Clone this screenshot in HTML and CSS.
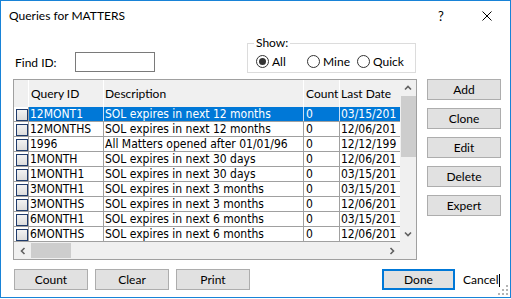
FILE: index.html
```html
<!DOCTYPE html>
<html>
<head>
<meta charset="utf-8">
<link rel="stylesheet" href="styles.css">
</head>
<body>
<div class="window">
  <div class="titlebar">
    <span class="title">Queries for MATTERS</span>
    <span class="capbtn help">?</span>
    <span class="capbtn"><svg width="10" height="10" viewBox="0 0 10 10"><path d="M0.5 0.5 L9.5 9.5 M9.5 0.5 L0.5 9.5" stroke="#000" stroke-width="1" fill="none"/></svg></span>
  </div>

  <div class="toprow">
    <div class="find">
      <span class="find-label">Find ID:</span>
      <span class="find-input"></span>
    </div>
    <fieldset class="show">
      <legend>Show:</legend>
      <div class="radios">
        <span class="opt opt-all"><span class="radio on"></span>All</span>
        <span class="opt opt-mine"><span class="radio"></span>Mine</span>
        <span class="opt"><span class="radio"></span>Quick</span>
      </div>
    </fieldset>
  </div>

  <div class="mainrow">
    <div class="list">
      <div class="list-main">
        <div class="row hdr">
          <span class="c-chk"></span>
          <span class="c-id">Query ID</span>
          <span class="c-desc">Description</span>
          <span class="c-cnt">Count</span>
          <span class="c-date">Last Date</span>
        </div>
        <div class="row sel"><span class="c-chk"><i class="cb"></i></span><span class="c-id">12MONT1</span><span class="c-desc">SOL expires in next 12 months</span><span class="c-cnt">0</span><span class="c-date">03/15/201</span></div>
        <div class="row"><span class="c-chk"><i class="cb"></i></span><span class="c-id">12MONTHS</span><span class="c-desc">SOL expires in next 12 months</span><span class="c-cnt">0</span><span class="c-date">12/06/201</span></div>
        <div class="row"><span class="c-chk"><i class="cb"></i></span><span class="c-id">1996</span><span class="c-desc">All Matters opened after 01/01/96</span><span class="c-cnt">0</span><span class="c-date">12/12/199</span></div>
        <div class="row"><span class="c-chk"><i class="cb"></i></span><span class="c-id">1MONTH</span><span class="c-desc">SOL expires in next 30 days</span><span class="c-cnt">0</span><span class="c-date">12/06/201</span></div>
        <div class="row"><span class="c-chk"><i class="cb"></i></span><span class="c-id">1MONTH1</span><span class="c-desc">SOL expires in next 30 days</span><span class="c-cnt">0</span><span class="c-date">03/15/201</span></div>
        <div class="row"><span class="c-chk"><i class="cb"></i></span><span class="c-id">3MONTH1</span><span class="c-desc">SOL expires in next 3 months</span><span class="c-cnt">0</span><span class="c-date">03/15/201</span></div>
        <div class="row"><span class="c-chk"><i class="cb"></i></span><span class="c-id">3MONTHS</span><span class="c-desc">SOL expires in next 3 months</span><span class="c-cnt">0</span><span class="c-date">12/06/201</span></div>
        <div class="row"><span class="c-chk"><i class="cb"></i></span><span class="c-id">6MONTH1</span><span class="c-desc">SOL expires in next 6 months</span><span class="c-cnt">0</span><span class="c-date">03/15/201</span></div>
        <div class="row"><span class="c-chk"><i class="cb"></i></span><span class="c-id">6MONTHS</span><span class="c-desc">SOL expires in next 6 months</span><span class="c-cnt">0</span><span class="c-date">12/06/201</span></div>
        <div class="hscroll">
          <span class="sb-btn"><svg width="8" height="8" viewBox="0 0 8 8"><path d="M5.5 1 L2.5 4 L5.5 7" stroke="#606060" stroke-width="1.6" fill="none"/></svg></span>
          <span class="hthumb"></span>
          <span class="htrack"></span>
          <span class="sb-btn"><svg width="8" height="8" viewBox="0 0 8 8"><path d="M2.5 1 L5.5 4 L2.5 7" stroke="#606060" stroke-width="1.6" fill="none"/></svg></span>
        </div>
      </div>
      <div class="list-side">
        <div class="vscroll">
          <span class="sb-btn v"><svg width="8" height="8" viewBox="0 0 8 8"><path d="M1 5.5 L4 2.5 L7 5.5" stroke="#606060" stroke-width="1.6" fill="none"/></svg></span>
          <span class="vthumb"></span>
          <span class="vtrack"></span>
          <span class="sb-btn v"><svg width="8" height="8" viewBox="0 0 8 8"><path d="M1 2.5 L4 5.5 L7 2.5" stroke="#606060" stroke-width="1.6" fill="none"/></svg></span>
        </div>
        <div class="corner"></div>
      </div>
    </div>
    <div class="sidebtns">
      <span class="btn">Add</span>
      <span class="btn">Clone</span>
      <span class="btn">Edit</span>
      <span class="btn">Delete</span>
      <span class="btn">Expert</span>
    </div>
  </div>

  <div class="bottomrow">
    <span class="btn">Count</span>
    <span class="btn">Clear</span>
    <span class="btn">Print</span>
    <span class="btn done">Done</span>
    <span class="cancel">Cancel<span class="caret"></span></span>
  </div>

  <svg class="grip" width="12" height="12" viewBox="0 0 12 12">
    <rect x="9" y="1" width="2" height="2" fill="#b4b4b4"/>
    <rect x="5" y="5" width="2" height="2" fill="#b4b4b4"/>
    <rect x="9" y="5" width="2" height="2" fill="#b4b4b4"/>
    <rect x="1" y="9" width="2" height="2" fill="#b4b4b4"/>
    <rect x="5" y="9" width="2" height="2" fill="#b4b4b4"/>
    <rect x="9" y="9" width="2" height="2" fill="#b4b4b4"/>
  </svg>
</div>
</body>
</html>
```

FILE: styles.css
```css
* { box-sizing: border-box; }
html, body { margin: 0; padding: 0; background: #fff; }
body {
  width: 511px;
  height: 299px;
  overflow: hidden;
  font-family: Lato, "Noto Sans", sans-serif;
  font-size: 12px;
  color: #000;
}
.window {
  position: relative;
  width: 511px;
  height: 298px;
  border: 1px solid #1883d7;
  background: #fff;
  display: flex;
  flex-direction: column;
}
.titlebar {
  height: 29px;
  display: flex;
  align-items: center;
  flex: none;
}
.title { flex: 1; padding-left: 8px; font-size: 12px; }
.capbtn {
  width: 46px;
  height: 29px;
  display: flex;
  align-items: center;
  justify-content: center;
}
.help { font-size: 13px; }

.toprow {
  display: flex;
  align-items: flex-end;
  margin-top: 5px;
  padding-left: 14px;
  flex: none;
}
.find { display: flex; align-items: center; margin-bottom: 1px; }
.find-label { width: 60px; }
.find-input {
  width: 80px;
  height: 20px;
  border: 1px solid #7a7a7a;
  background: #fff;
}
.show {
  margin: 0 0 0 92px;
  width: 169px;
  height: 38px;
  padding: 0 0 0 8px;
  border: 1px solid #dcdcdc;
  min-inline-size: 0;
}
.show legend {
  padding: 0 2px;
  margin-left: -2px;
  line-height: 16px;
  font-size: 12px;
}
.radios { display: flex; align-items: center; height: 20px; }
.opt { display: flex; align-items: center; }
.opt-all { width: 51px; }
.opt-mine { width: 50px; }
.radio {
  width: 13px;
  height: 13px;
  border: 1px solid #333;
  border-radius: 50%;
  background: #fff;
  margin-right: 3px;
  display: flex;
  align-items: center;
  justify-content: center;
}
.radio.on::after {
  content: "";
  width: 7px;
  height: 7px;
  border-radius: 50%;
  background: #333;
}

.mainrow {
  display: flex;
  align-items: flex-start;
  margin-top: 6px;
  padding-left: 12px;
  flex: none;
}
.list {
  display: flex;
  border: 1px solid #a0a0a0;
  background: #fff;
}
.list-main { width: 386px; display: flex; flex-direction: column; }
.list-side { width: 16px; display: flex; flex-direction: column; }

.row {
  display: flex;
  height: 15px;
  border-bottom: 1px solid #a0a0a0;
  font-family: "DejaVu Sans Condensed", "DejaVu Sans", sans-serif;
  font-stretch: condensed;
  font-size: 12px;
  line-height: 14px;
  color: #000;
  white-space: nowrap;
}
.row > span { overflow: hidden; border-right: 1px solid #a0a0a0; }
.row > span:last-child { border-right: none; }
.c-chk { width: 15px; flex: none; }
.c-id { width: 75px; flex: none; padding-left: 1px; }
.c-desc { width: 200px; flex: none; padding-left: 1px; }
.c-cnt { width: 36px; flex: none; padding-left: 2px; }
.c-date { width: 60px; flex: none; padding-left: 1px; }

.row.hdr {
  height: 27px;
  border-bottom: none;
  background: #f0f0f0;
  font-family: Lato, "Noto Sans", sans-serif;
  font-stretch: normal;
  font-size: 12px;
  align-items: center;
}
.row.hdr > span {
  height: 27px;
  line-height: 27px;
  border-right-color: #fff;
}
.row.hdr .c-id { padding-left: 2px; }

.row.sel > span:not(.c-chk) { background: #0078d7; color: #fff; }
.row.sel .c-id, .row.sel .c-desc, .row.sel .c-cnt { border-right-color: #c9def5; }

.cb {
  display: block;
  width: 12px;
  height: 12px;
  margin: 2px 0 0 2px;
  border: 1px solid #1f3b6b;
  background: linear-gradient(#f2f2f2, #dcdcdc);
}

.hscroll {
  height: 17px;
  display: flex;
  background: #f0f0f0;
}
.sb-btn {
  width: 17px;
  height: 17px;
  flex: none;
  display: flex;
  align-items: center;
  justify-content: center;
}
.hthumb { width: 40px; height: 15px; margin-top: 1px; background: #cdcdcd; flex: none; }
.htrack { flex: 1; }

.vscroll {
  height: 162px;
  display: flex;
  flex-direction: column;
  background: #f0f0f0;
}
.sb-btn.v { width: 16px; height: 16px; }
.vthumb { height: 61px; margin-left: 1px; background: #cdcdcd; flex: none; }
.vtrack { flex: 1; }
.corner { height: 17px; background: #f0f0f0; }

.sidebtns {
  margin-left: 10px;
  display: flex;
  flex-direction: column;
  gap: 8px;
}
.btn {
  width: 74px;
  height: 21px;
  display: flex;
  align-items: center;
  justify-content: center;
  background: #e1e1e1;
  border: 1px solid #adadad;
  font-size: 12px;
}

.bottomrow {
  display: flex;
  align-items: center;
  margin-top: 9px;
  padding-left: 13px;
  gap: 7px;
  flex: none;
}
.btn.done {
  margin-left: 125px;
  width: 73px;
  border: 2px solid #0078d7;
}
.cancel { margin-left: 1px; display: flex; align-items: center; }
.caret {
  display: inline-block;
  width: 1px;
  height: 13px;
  margin-left: 1px;
  margin-top: 2px;
  background: #000;
}
.grip { position: absolute; right: 1px; bottom: 1px; }
```
